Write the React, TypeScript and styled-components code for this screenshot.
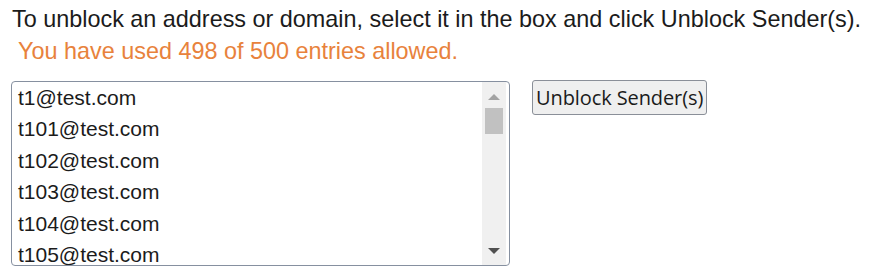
import React, { ReactElement } from 'react';
import styled, { createGlobalStyle } from 'styled-components';

const GlobalStyle = createGlobalStyle`
  body {
    margin: 0;
    background: #fff;
    font-family: "Liberation Sans", Arial, sans-serif;
  }
`;

const Page = styled.div`
  padding: 6px 0 0 12px;
`;

const Instructions = styled.p`
  margin: 0;
  font-size: 23.4px;
  color: #1b1b1b;
`;

const Usage = styled.p`
  margin: 5px 0 0 6px;
  font-size: 23.4px;
  color: #e8823c;
`;

const Row = styled.div`
  display: flex;
  align-items: flex-start;
  gap: 22px;
  margin: 16px 0 0 -1px;
`;

const ListBox = styled.div`
  display: flex;
  width: 497px;
  height: 183px;
  border: 1.5px solid #8690a0;
  border-radius: 4px;
  overflow: hidden;
  background: #fff;
`;

const Items = styled.ul`
  flex: 1;
  margin: 0;
  padding: 0 0 0 6px;
  list-style: none;
  overflow: hidden;
`;

const Item = styled.li`
  font-size: 21px;
  line-height: 31.4px;
  color: #1b1b1b;
  white-space: nowrap;
`;

const Track = styled.div`
  width: 24px;
  margin-right: 3px;
  display: flex;
  flex-direction: column;
  align-items: center;
  background: #f0f0f0;
`;

const Arrow = styled.div<{ $down?: boolean; $color: string }>`
  width: 0;
  height: 0;
  margin: ${(p) => (p.$down ? 'auto 0 11px' : '12px 0 0')};
  border-left: 6px solid transparent;
  border-right: 6px solid transparent;
  ${(p) =>
    p.$down
      ? `border-top: 6px solid ${p.$color};`
      : `border-bottom: 6px solid ${p.$color};`}
`;

const Thumb = styled.div`
  width: 18px;
  height: 26px;
  margin-top: 8px;
  background: #c1c1c1;
`;

const Button = styled.button`
  margin-top: -1px;
  height: 35px;
  padding: 0 3px;
  font-family: "Open Sans", "Noto Sans", sans-serif;
  font-size: 20px;
  letter-spacing: -0.1px;
  color: #1b1b1b;
  background: #efefef;
  border: 1.5px solid #8a8f98;
  border-radius: 3px;
`;

const entries = [
  't1@test.com',
  't101@test.com',
  't102@test.com',
  't103@test.com',
  't104@test.com',
  't105@test.com',
];

const App = (): ReactElement => (
  <Page>
    <GlobalStyle />
    <Instructions>
      To unblock an address or domain, select it in the box and click Unblock Sender(s).
    </Instructions>
    <Usage>You have used 498 of 500 entries allowed.</Usage>
    <Row>
      <ListBox>
        <Items>
          {entries.map((e) => (
            <Item key={e}>{e}</Item>
          ))}
        </Items>
        <Track>
          <Arrow $color="#a3a3a3" />
          <Thumb />
          <Arrow $down $color="#505050" />
        </Track>
      </ListBox>
      <Button>Unblock Sender(s)</Button>
    </Row>
  </Page>
);

export default App;
